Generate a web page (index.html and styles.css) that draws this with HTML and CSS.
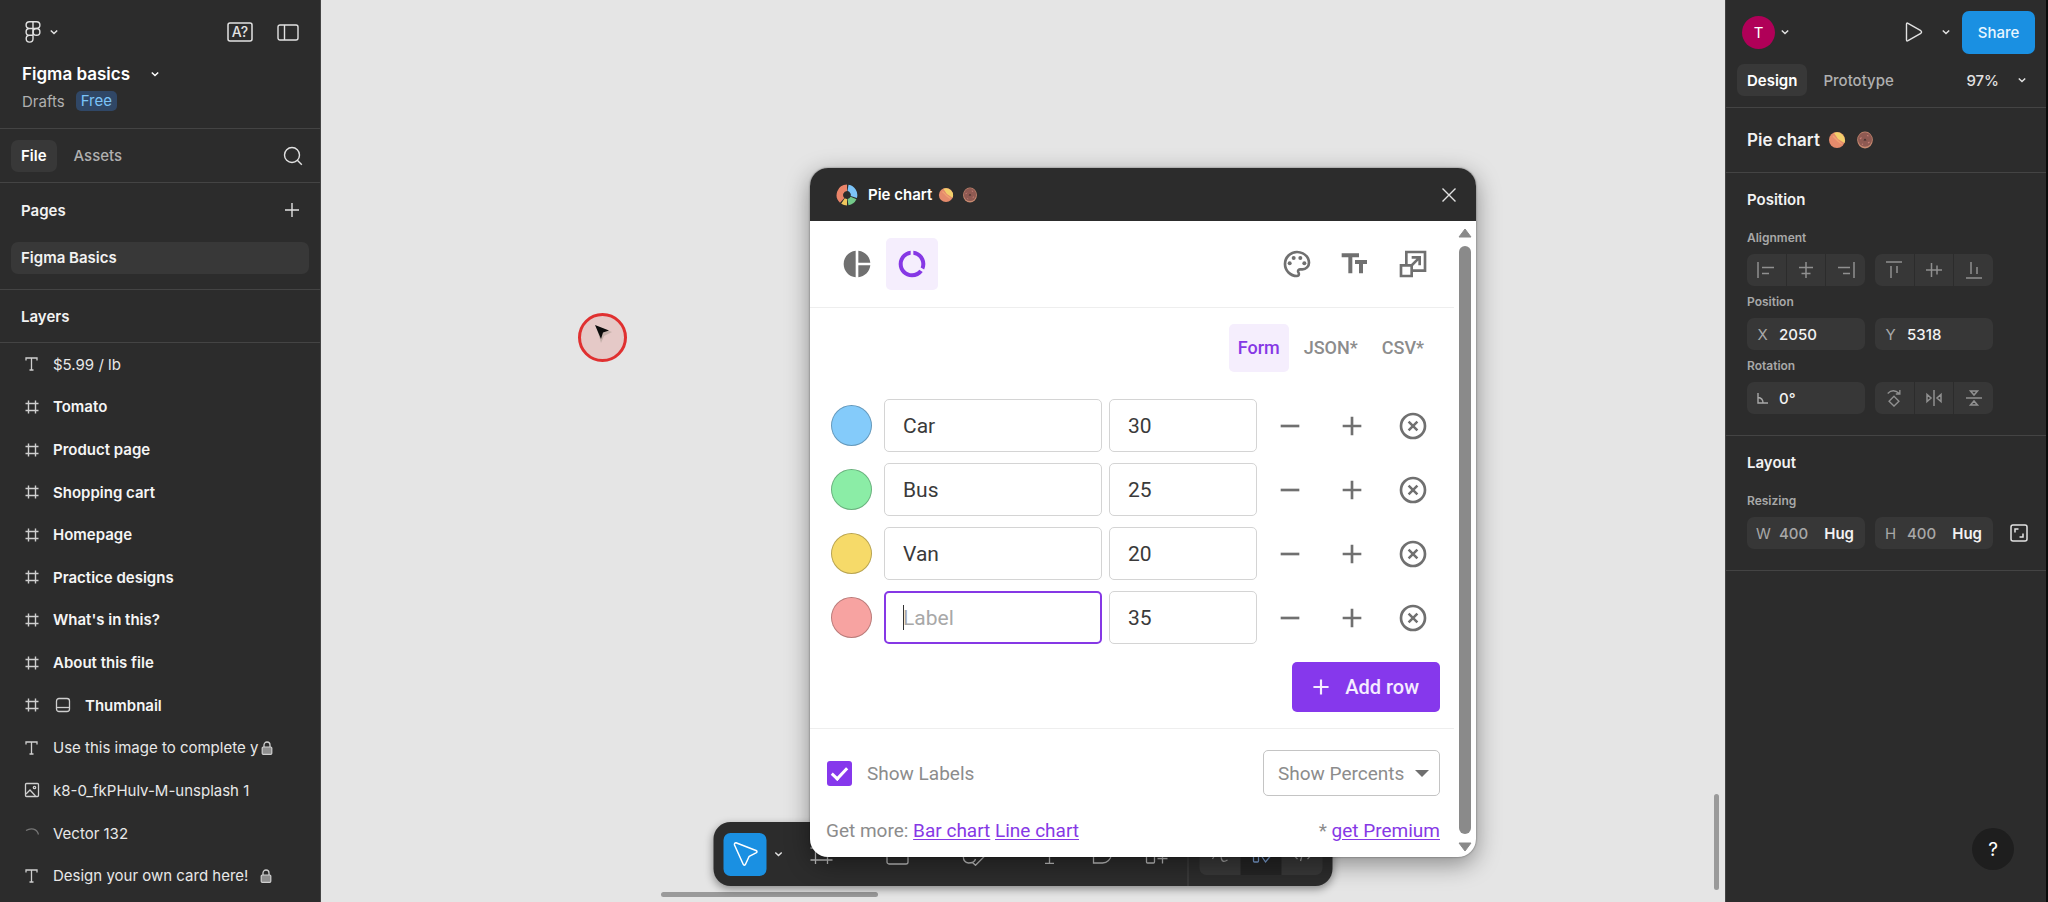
FILE: index.html
```html
<!DOCTYPE html>
<html lang="en">
<head>
<meta charset="utf-8">
<title>Figma basics</title>
<link rel="stylesheet" href="styles.css">
</head>
<body>
<svg class="defs" aria-hidden="true">
  <symbol id="chev" viewBox="0 0 14 14"><path d="M3.800 5.500 7 8.500l3.200-3" fill="none" stroke="currentColor" stroke-width="1.500"/></symbol>
  <symbol id="frame" viewBox="0 0 16 16"><path d="M4.500 1.500v13M11.500 1.500v13M1.500 4.500h13M1.500 11.500h13" fill="none" stroke="currentColor" stroke-width="1.400"/></symbol>
  <symbol id="text" viewBox="0 0 16 16"><path d="M2 4.500V2h11v2.500M7.500 2v12M5.500 14h4" fill="none" stroke="currentColor" stroke-width="1.300"/></symbol>
  <symbol id="lock" viewBox="0 0 12 16"><path d="M3 7V5a3 3 0 0 1 6 0v2" fill="none" stroke="currentColor" stroke-width="1.300"/><rect x="1.200" y="7" width="9.600" height="7.300" rx="1" fill="#8f8f8f" stroke="currentColor" stroke-width="1.200"/></symbol>
  <symbol id="peach" viewBox="0 0 18 18"><circle cx="9" cy="9" r="8" fill="#e58b6c"/><path d="M6 2A8 8 0 0 1 16.500 12L10 8Z" fill="#f2cf6b"/><path d="m5 5 3 3 2 2 4 3" fill="none" stroke="#f0a272" stroke-width="1.500"/></symbol>
  <symbol id="donut" viewBox="0 0 18 18"><ellipse cx="9" cy="9" rx="7.800" ry="8.400" fill="#c88a70"/><ellipse cx="9" cy="8.500" rx="7" ry="7.300" fill="#8f5a52"/><path d="M7.500 9.500 9 7.500l1.500 2Z" fill="#3a2b29"/><path d="m4 8 1.500-1.500M11 4.500l1.500.5M12 12l1.500-1M6 13l1 .5" stroke="#c77f76" stroke-width="1.100"/></symbol>
  <symbol id="minus" viewBox="0 0 24 24"><path d="M19 13H5v-2h14Z" fill="currentColor"/></symbol>
  <symbol id="plus" viewBox="0 0 24 24"><path d="M19 13h-6v6h-2v-6H5v-2h6V5h2v6h6Z" fill="currentColor"/></symbol>
  <symbol id="remove" viewBox="0 0 24 24"><circle cx="12" cy="12" r="9" fill="none" stroke="currentColor" stroke-width="2"/><path d="m8.700 8.700 6.600 6.600m0-6.600-6.600 6.600" stroke="currentColor" stroke-width="1.900"/></symbol>
</svg>

<div class="app">
  <aside class="panel left">
    <header class="file-head">
      <div class="bar">
        <button class="bare menu" aria-label="Main menu">
          <svg width="18" height="24" viewBox="0 0 18 24" fill="none" stroke="currentColor" stroke-width="1.400"><path d="M9 1.700H5.500a3.400 3.400 0 0 0 0 6.800H9ZM9 1.700h3.500a3.400 3.400 0 0 1 0 6.800H9ZM9 8.500H5.500a3.400 3.400 0 0 0 0 6.800H9ZM9 15.300H5.500A3.400 3.400 0 1 0 9 18.700Z"/><circle cx="12.500" cy="11.900" r="3.400"/></svg>
          <svg width="14" height="14"><use href="#chev"/></svg>
        </button>
        <span class="grow"></span>
        <button class="bare" aria-label="Missing fonts"><svg width="26" height="20" viewBox="0 0 26 20"><rect x="1" y="1" width="24" height="18" rx="2" fill="none" stroke="currentColor" stroke-width="1.500"/><text x="13" y="15" text-anchor="middle" class="svg-label">A?</text></svg></button>
        <button class="bare" aria-label="Toggle panels"><svg width="22" height="17" viewBox="0 0 22 17" fill="none" stroke="currentColor" stroke-width="1.400"><rect x="1" y="1" width="20" height="15" rx="2"/><path d="M7.500 1v15"/></svg></button>
      </div>
      <button class="bare file-name">Figma basics <svg width="14" height="14"><use href="#chev"/></svg></button>
      <div class="crumbs"><a href="#drafts">Drafts</a><span class="plan">Free</span></div>
    </header>
    <nav class="tabs">
      <button class="tab on">File</button><button class="tab">Assets</button>
      <span class="grow"></span>
      <button class="bare" aria-label="Search"><svg width="20" height="20" viewBox="0 0 20 20" fill="none" stroke="currentColor" stroke-width="1.400"><circle cx="9" cy="9" r="7.500"/><path d="m14.300 14.300 4.500 4.500"/></svg></button>
    </nav>
    <section class="pages">
      <div class="section-head"><h2>Pages</h2><button class="bare" aria-label="Add page"><svg width="16" height="16" viewBox="0 0 16 16" stroke="currentColor" stroke-width="1.400"><path d="M8 1v14M1 8h14"/></svg></button></div>
      <button class="page-item">Figma Basics</button>
    </section>
    <div class="section-head layers-head"><h2>Layers</h2></div>
    <ul class="layers">
      <li><svg class="ico"><use href="#text"/></svg><span>$5.99 / lb</span></li>
      <li class="strong"><svg class="ico"><use href="#frame"/></svg><span>Tomato</span></li>
      <li class="strong"><svg class="ico"><use href="#frame"/></svg><span>Product page</span></li>
      <li class="strong"><svg class="ico"><use href="#frame"/></svg><span>Shopping cart</span></li>
      <li class="strong"><svg class="ico"><use href="#frame"/></svg><span>Homepage</span></li>
      <li class="strong"><svg class="ico"><use href="#frame"/></svg><span>Practice designs</span></li>
      <li class="strong"><svg class="ico"><use href="#frame"/></svg><span>What's in this?</span></li>
      <li class="strong"><svg class="ico"><use href="#frame"/></svg><span>About this file</span></li>
      <li class="strong"><svg class="ico"><use href="#frame"/></svg><svg class="ico thumb" viewBox="0 0 16 16" fill="none" stroke="currentColor" stroke-width="1.300"><rect x="1.500" y="1.500" width="13" height="13" rx="2.500"/><path d="M1.500 10.500h13"/></svg><span>Thumbnail</span></li>
      <li><svg class="ico"><use href="#text"/></svg><span class="name">Use this image to complete y</span><svg class="lock"><use href="#lock"/></svg></li>
      <li><svg class="ico" viewBox="0 0 16 16" fill="none" stroke="currentColor" stroke-width="1.300"><rect x="1.500" y="1.500" width="13" height="13" rx="1"/><path d="m2 12 4-4 5.500 6"/><circle cx="10.500" cy="5.500" r="1.200"/></svg><span>k8-0_fkPHulv-M-unsplash 1</span></li>
      <li><svg class="ico" viewBox="0 0 16 16" fill="none" stroke="#777" stroke-width="1.200"><path d="M2 5.500c5-3 11-2 12.500 4"/></svg><span>Vector 132</span></li>
      <li><svg class="ico"><use href="#text"/></svg><span class="name">Design your own card here!</span><svg class="lock"><use href="#lock"/></svg></li>
    </ul>
  </aside>

  <main class="canvas">
    <div class="pointer"><svg width="20" height="20" viewBox="0 0 20 20"><path d="m2 2 5 17 3-7 8-4Z" fill="#c4b0aa"/><path d="M1 1l14 5.500L9 8.500 7 15Z" fill="#0c0c0c"/></svg></div>
    <div class="scroll-v"></div>
    <div class="scroll-h"></div>

    <div class="tools">
      <button class="move" aria-label="Move"><svg width="26" height="26" viewBox="0 0 26 26" fill="none" stroke="currentColor" stroke-width="1.500" stroke-linejoin="round"><path d="M3.500 1.800 23.500 9.500q2 1.200 0 2.300l-6.800 3.500-3.700 8q-1.400 2-2.300 0L2 4Q1.600 1.800 3.500 1.800Z"/></svg></button>
      <svg class="tool-chev" width="14" height="14"><use href="#chev"/></svg>
      <button class="bare tool" aria-label="Frame"><svg width="24" height="24" viewBox="0 0 24 24" fill="none" stroke="currentColor" stroke-width="1.300"><path d="M6 2v20M18 2v20M1 6h22M1 18h22"/></svg></button>
      <button class="bare tool" aria-label="Rectangle"><svg width="24" height="24" viewBox="0 0 24 24" fill="none" stroke="currentColor" stroke-width="1.300"><rect x="1.500" y="2" width="21" height="20" rx="2"/></svg></button>
      <button class="bare tool" aria-label="Pen"><svg width="24" height="24" viewBox="0 0 24 24" fill="none" stroke="currentColor" stroke-width="1.300"><path d="m12 2-10 11q-1 7 5 8l4-.5 3 2.800 9-9V9ZM7 21q6 0 7-4"/></svg></button>
      <button class="bare tool" aria-label="Text"><svg width="24" height="24" viewBox="0 0 24 24" fill="none" stroke="currentColor" stroke-width="1.300"><path d="M3 6V3h18v3M12 3v18M7.500 21.300h9"/></svg></button>
      <button class="bare tool close-set" aria-label="Comment"><svg width="24" height="24" viewBox="0 0 24 24" fill="none" stroke="currentColor" stroke-width="1.300"><path d="M2 21V10a9 9 0 1 1 9 11Z"/></svg></button>
      <button class="bare tool close-set" aria-label="Actions"><svg width="24" height="24" viewBox="0 0 24 24" fill="none" stroke="currentColor" stroke-width="1.300"><rect x="2" y="12" width="8" height="9" rx="1"/><rect x="2" y="2" width="8" height="7" rx="1"/><path d="M18 11.500v10M13 16.500h10"/></svg></button>
      <span class="rule"></span>
      <div class="modes">
        <button aria-label="Draw"><svg width="24" height="24" viewBox="0 0 24 24" fill="none" stroke="currentColor" stroke-width="1.300"><path d="m4 17 7-12 2 12q1 4 6 1"/></svg></button>
        <button class="on" aria-label="Design"><svg width="24" height="24" viewBox="0 0 24 24" fill="none" stroke="#7da2d6" stroke-width="1.300"><rect x="4" y="14" width="5" height="6" rx="1"/><path d="m12 14 4 6 5-6"/></svg></button>
        <button aria-label="Dev mode"><svg width="24" height="24" viewBox="0 0 24 24" fill="none" stroke="currentColor" stroke-width="1.300"><path d="m7 7-5 5 5 5M17 7l5 5-5 5M14 5l-4 14"/></svg></button>
      </div>
    </div>

    <section class="dialog" role="dialog" aria-label="Pie chart">
      <header class="dialog-head">
        <svg width="22" height="22" viewBox="0 0 22 22" fill="none" stroke-width="6.500"><path d="M12 3.900A7.200 7.200 0 0 1 17.800 13" stroke="#7cc4f8"/><path d="M17.500 14a7.200 7.200 0 0 1-5.500 4.100" stroke="#74c98a"/><path d="M11 18.200a7.200 7.200 0 0 1-4-1.200" stroke="#f0c75c"/><path d="M6.200 16.300a7.200 7.200 0 0 1 4.800-12.500" stroke="#ea8469"/></svg>
        <h1>Pie chart</h1>
        <svg class="emo"><use href="#peach"/></svg><svg class="emo"><use href="#donut"/></svg>
        <span class="grow"></span>
        <button class="bare" aria-label="Close"><svg width="14" height="14" viewBox="0 0 14 14" stroke="currentColor" stroke-width="1.400"><path d="m.5.5 13 13m0-13-13 13"/></svg></button>
      </header>
      <div class="dialog-body">
        <div class="plugin">
          <div class="chart-bar">
            <button class="sq" aria-label="Pie"><svg class="mi" viewBox="0 0 24 24"><path d="M11 2v20C5.900 21.500 2 17.200 2 12S5.900 2.500 11 2m2 0v9h9c-.5-4.800-4.200-8.500-9-9m0 11v9c4.700-.5 8.500-4.200 9-9Z"/></svg></button>
            <button class="sq on" aria-label="Donut"><svg class="mi" viewBox="0 0 24 24"><path d="M13 2.050v3.030c3.390.49 6 3.390 6 6.920 0 .9-.18 1.750-.48 2.540l2.600 1.530c.56-1.240.88-2.620.88-4.070 0-5.180-3.950-9.450-9-9.950zM12 19c-3.870 0-7-3.130-7-7 0-3.530 2.610-6.430 6-6.920V2.050c-5.060.5-9 4.760-9 9.950 0 5.520 4.470 10 9.990 10 3.310 0 6.240-1.610 8.060-4.090l-2.600-1.530C16.170 17.980 14.210 19 12 19z"/></svg></button>
            <span class="grow"></span>
            <div class="chart-opts">
              <button class="sq" aria-label="Colors"><svg class="mi" viewBox="0 0 24 24"><path d="M12 22A10 10 0 0 1 12 2c5.500 0 10 4 10 9a6 6 0 0 1-6 6h-1.800c-.3 0-.5.2-.5.500 0 .1.100.2.100.300.400.500.600 1.100.600 1.700.100 1.400-1 2.500-2.400 2.500m0-18a8 8 0 1 0 0 16c.3 0 .5-.2.500-.5 0-.2-.1-.3-.1-.4-.4-.5-.6-1-.6-1.600 0-1.400 1.100-2.500 2.500-2.500H16a4 4 0 0 0 4-4c0-3.900-3.600-7-8-7"/><circle cx="6.500" cy="11.500" r="1.500"/><circle cx="9.500" cy="7.500" r="1.500"/><circle cx="14.500" cy="7.500" r="1.500"/><circle cx="17.500" cy="11.500" r="1.500"/></svg></button>
              <button class="sq" aria-label="Text size"><svg class="mi" viewBox="0 0 24 24"><path d="M2 4v3h5v12h3V7h5V4H2m19 5h-9v3h3v7h3v-7h3V9Z"/></svg></button>
              <button class="sq" aria-label="Resize"><svg class="mi" viewBox="0 0 24 24"><path d="m10.590 12 4-4H11V6h7v7h-2V9.410l-4 4V16h8V4H8v8h2.590M22 2v16H12v4H2V12h4V2h16M10 14H4v6h6v-6Z"/></svg></button>
            </div>
          </div>
          <div class="data">
            <div class="data-tabs"><button class="on">Form</button><button>JSON*</button><button>CSV*</button></div>
            <div class="rows">
              <div class="row"><button class="swatch blue" aria-label="Color of row 1"></button><span class="field"><input aria-label="Label 1" value="Car"></span><input class="num" aria-label="Value 1" value="30"><div class="acts"><button class="sq" aria-label="Decrease"><svg class="mi"><use href="#minus"/></svg></button><button class="sq" aria-label="Increase"><svg class="mi"><use href="#plus"/></svg></button><button class="sq" aria-label="Remove"><svg class="mi"><use href="#remove"/></svg></button></div></div>
              <div class="row"><button class="swatch green" aria-label="Color of row 2"></button><span class="field"><input aria-label="Label 2" value="Bus"></span><input class="num" aria-label="Value 2" value="25"><div class="acts"><button class="sq" aria-label="Decrease"><svg class="mi"><use href="#minus"/></svg></button><button class="sq" aria-label="Increase"><svg class="mi"><use href="#plus"/></svg></button><button class="sq" aria-label="Remove"><svg class="mi"><use href="#remove"/></svg></button></div></div>
              <div class="row"><button class="swatch yellow" aria-label="Color of row 3"></button><span class="field"><input aria-label="Label 3" value="Van"></span><input class="num" aria-label="Value 3" value="20"><div class="acts"><button class="sq" aria-label="Decrease"><svg class="mi"><use href="#minus"/></svg></button><button class="sq" aria-label="Increase"><svg class="mi"><use href="#plus"/></svg></button><button class="sq" aria-label="Remove"><svg class="mi"><use href="#remove"/></svg></button></div></div>
              <div class="row"><button class="swatch red" aria-label="Color of row 4"></button><span class="field active"><input aria-label="Label 4" placeholder="Label"></span><input class="num" aria-label="Value 4" value="35"><div class="acts"><button class="sq" aria-label="Decrease"><svg class="mi"><use href="#minus"/></svg></button><button class="sq" aria-label="Increase"><svg class="mi"><use href="#plus"/></svg></button><button class="sq" aria-label="Remove"><svg class="mi"><use href="#remove"/></svg></button></div></div>
            </div>
            <button class="add"><svg width="26" height="26"><use href="#plus"/></svg>Add row</button>
          </div>
          <footer class="plugin-foot">
            <div class="foot-row">
              <label class="check"><input type="checkbox" checked>Show Labels</label>
              <span class="select"><select aria-label="Value display"><option>Show Percents</option></select><svg width="14" height="7" viewBox="0 0 14 7"><path d="M0 0h14L7 7Z" fill="#6f6f6f"/></svg></span>
            </div>
            <div class="foot-row more"><span>Get more: <a href="#bar">Bar chart</a> <a href="#line">Line chart</a></span><span>* <a href="#premium">get Premium</a></span></div>
          </footer>
        </div>
        <div class="scrollbar"><svg width="14" height="10" viewBox="0 0 14 10"><path d="M7 1 13 9H1Z" fill="#8a8a8a" stroke="#8a8a8a" stroke-linejoin="round"/></svg><span></span><svg width="14" height="10" viewBox="0 0 14 10"><path d="M7 9 13 1H1Z" fill="#8a8a8a" stroke="#8a8a8a" stroke-linejoin="round"/></svg></div>
      </div>
    </section>
  </main>

  <aside class="panel right">
    <header class="share-head">
      <div class="bar">
        <button class="bare user" aria-label="Account"><span class="avatar">T</span><svg width="14" height="14"><use href="#chev"/></svg></button>
        <span class="grow"></span>
        <button class="bare play" aria-label="Present"><svg width="18" height="20" viewBox="0 0 18 20" fill="none" stroke="currentColor" stroke-width="1.400" stroke-linejoin="round"><path d="M1.500 2.200Q1.500.5 3 1.300L15.800 8.700q1.500 1.300 0 2.600L3 18.700q-1.500.8-1.500-.9Z"/></svg><svg width="14" height="14"><use href="#chev"/></svg></button>
        <button class="share">Share</button>
      </div>
      <div class="mode-tabs">
        <button class="tab on">Design</button><button class="tab">Prototype</button>
        <span class="grow"></span>
        <button class="bare zoom">97% <svg width="14" height="14"><use href="#chev"/></svg></button>
      </div>
    </header>
    <h2 class="sel-name">Pie chart <svg class="emo"><use href="#peach"/></svg><svg class="emo"><use href="#donut"/></svg></h2>
    <section class="props">
      <h3>Position</h3>
      <h4>Alignment</h4>
      <div class="pair">
        <div class="seg">
          <button aria-label="Align left"><svg class="al" viewBox="0 0 18 18"><path d="M1 1v16M5 6.500h12M5 12.500h7"/></svg></button>
          <button aria-label="Align horizontal centers"><svg class="al" viewBox="0 0 18 18"><path d="M9 1v16M2 6.500h14M4.500 12.500h9"/></svg></button>
          <button aria-label="Align right"><svg class="al" viewBox="0 0 18 18"><path d="M17 1v16M1 6.500h12M6 12.500h7"/></svg></button>
        </div>
        <div class="seg">
          <button aria-label="Align top"><svg class="al" viewBox="0 0 18 18"><path d="M1 1h16M6 5v12M12 5v7"/></svg></button>
          <button aria-label="Align vertical centers"><svg class="al" viewBox="0 0 18 18"><path d="M1 9h16M6.500 2v14M12 4.500v9"/></svg></button>
          <button aria-label="Align bottom"><svg class="al" viewBox="0 0 18 18"><path d="M1 17h16M6 1v12M12 6v7"/></svg></button>
        </div>
      </div>
      <h4>Position</h4>
      <div class="pair">
        <label class="prop"><span>X</span><input value="2050"></label>
        <label class="prop"><span>Y</span><input value="5318"></label>
      </div>
      <h4>Rotation</h4>
      <div class="pair">
        <label class="prop"><span><svg width="11" height="11" viewBox="0 0 11 11" fill="none" stroke="currentColor" stroke-width="1.400"><path d="M1 0v10h10M1 4.500Q6 5 6 10"/></svg></span><input aria-label="Rotation" value="0°"></label>
        <div class="seg">
          <button aria-label="Rotate 90"><svg class="al" viewBox="0 0 18 20"><path d="m9 8 5.500 5.500L9 19l-5.500-5.500ZM2 5q6-6 13 0M15.500 1v4.500H11"/></svg></button>
          <button aria-label="Flip horizontal"><svg class="al" viewBox="0 0 18 18"><path d="M9 1v16M2 5.500v7L6 9ZM16 5.500v7L12 9Z"/></svg></button>
          <button aria-label="Flip vertical"><svg class="al" viewBox="0 0 18 18"><path d="M1 9h16M5.500 2h7L9 6ZM5.500 16h7L9 12Z"/></svg></button>
        </div>
      </div>
    </section>
    <section class="props">
      <h3>Layout</h3>
      <h4>Resizing</h4>
      <div class="pair">
        <label class="prop"><span>W</span><input class="dim" value="400"><b>Hug</b></label>
        <label class="prop"><span>H</span><input class="dim" value="400"><b>Hug</b></label>
        <button class="bare" aria-label="Resize to fit"><svg width="18" height="18" viewBox="0 0 18 18" fill="none" stroke="currentColor" stroke-width="1.500"><rect x="1" y="1" width="16" height="16" rx="2"/><path d="M5 8.500V5h3.500M13 9.500V13H9.500"/></svg></button>
      </div>
    </section>
    <span class="grow"></span>
    <button class="help" aria-label="Help">?</button>
  </aside>
</div>
</body>
</html>
```
FILE: styles.css
```css
* { box-sizing: border-box; }
body { margin: 0; background: #0b0b0b; font-family: Inter, "Liberation Sans", sans-serif; font-size: 15px; }
button, input, select { font: inherit; color: inherit; margin: 0; }
button { border: 0; background: none; padding: 0; cursor: pointer; }
h1, h2, h3, h4 { margin: 0; font-size: 15px; font-weight: 600; }
svg { display: block; flex: none; }
.defs { position: absolute; width: 0; height: 0; }
.grow { flex: 1; }
.svg-label { font-size: 14px; font-weight: 500; fill: currentColor; }

.app { display: grid; grid-template-columns: 321px 1fr 321px; height: 100vh; min-height: 860px; padding-right: 2px; }
.panel { display: flex; flex-direction: column; background: #2c2c2c; color: #f2f2f2; min-width: 0; }
.left { border-right: 1px solid #444; }
.right { border-left: 1px solid #444; }
.bare { display: flex; align-items: center; color: #e2e2e2; }
.bar { display: flex; align-items: center; height: 44px; }
.emo { width: 18px; height: 18px; }

.file-head { padding: 10px 21px 15px 22px; border-bottom: 1px solid #444; }
.file-head .bar { gap: 24px; }
.menu { gap: 5px; padding-left: 2px; }
.file-name { height: 30px; margin-top: 5px; gap: 18px; font-size: 17px; font-weight: 600; color: #fff; }
.crumbs { display: flex; align-items: center; gap: 11px; height: 24px; color: #b0b0b0; }
.crumbs a { color: inherit; text-decoration: none; }
.plan { padding: 0 5px; line-height: 20px; border-radius: 5px; background: #304766; color: #7cc4f8; }

.tabs { display: flex; align-items: center; height: 54px; padding: 0 17px 0 11px; gap: 7px; border-bottom: 1px solid #444; }
.tab { height: 32px; padding: 0 10px; border-radius: 7px; font-weight: 500; color: #b0b0b0; }
.tab.on { background: #383838; color: #fff; font-weight: 600; }
.section-head { display: flex; align-items: center; justify-content: space-between; height: 54px; padding: 0 20px 0 21px; }
.pages { padding-bottom: 15px; border-bottom: 1px solid #444; }
.page-item { display: block; width: calc(100% - 22px); height: 32px; margin: 5px 11px 0; padding: 0 10px 1px; border-radius: 7px; background: #383838; text-align: left; font-weight: 600; }
.layers-head { height: 53px; border-bottom: 1px solid #444; }
.layers { display: flex; flex-direction: column; flex: 1; list-style: none; margin: 0; padding: 0 48px 5px 24px; color: #e8e8e8; }
.layers li { display: flex; flex: 1; align-items: center; gap: 13px; white-space: nowrap; }
.strong { font-weight: 600; color: #f5f5f5; }
.ico { width: 16px; height: 16px; color: #cfcfcf; }
.thumb { margin: 0 1px 0 2px; }
.name { flex: 1; }
.lock { width: 12px; height: 16px; margin-left: -10px; color: #cfcfcf; }

.canvas { position: relative; overflow: hidden; background: #e5e5e5; }
.pointer { position: absolute; left: 257px; top: 313px; width: 49px; height: 49px; padding: 8px 13px; border: 3px solid #e03030; border-radius: 50%; background: #e5c9c7; }
.scroll-v { position: absolute; right: 6px; top: 794px; width: 5px; height: 96px; border-radius: 3px; background: #9a9a9a; }
.scroll-h { position: absolute; left: 340px; bottom: 5px; width: 217px; height: 5px; border-radius: 3px; background: #9a9a9a; }

.tools { position: absolute; left: 50%; bottom: 16px; transform: translateX(-50%); display: flex; align-items: center; width: 619px; height: 64px; padding: 0 10px; border-radius: 17px; background: #2c2c2c; color: #e2e2e2; box-shadow: 0 3px 8px rgba(0, 0, 0, .4); }
.move { display: grid; place-items: center; width: 43px; height: 43px; border-radius: 7px; background: #1a90e2; color: #fff; }
.tool-chev { margin: 0 24px 0 5px; }
.tool { margin-right: 52px; color: #bdbdbd; }
.tool[aria-label="Text"] { margin-right: 30px; }
.close-set { margin-right: 29px; }
.close-set + .close-set { margin-right: 19px; }
.rule { width: 1px; align-self: stretch; background: #444; }
.modes { display: flex; flex: 1; margin-left: 11px; height: 42px; border-radius: 7px; overflow: hidden; background: #383838; color: #a0a0a0; }
.modes button { flex: 1; display: grid; place-items: center; }
.modes .on { background: #242424; }

.dialog { position: absolute; left: 489px; top: 168px; width: 666px; border-radius: 18px; overflow: hidden; background: #fff; box-shadow: 0 0 2px rgba(0, 0, 0, .5), 0 7px 24px rgba(0, 0, 0, .4); font-family: Roboto, "Liberation Sans", sans-serif; color: #8c8c8c; }
.dialog-head { display: flex; align-items: center; height: 53px; padding: 0 20px 0 26px; background: #2c2c2c; color: #fff; font-family: Inter, "Liberation Sans", sans-serif; }
.dialog-head h1 { margin: 0 6px 0 10px; }
.dialog-head .emo { width: 16px; height: 16px; margin-right: 8px; }
.dialog-body { display: flex; }
.plugin { flex: 1; }
.scrollbar { display: flex; flex-direction: column; align-items: center; gap: 8px; width: 22px; padding: 7px 0 5px; }
.scrollbar span { flex: 1; width: 12px; border-radius: 6px; background: #8a8a8a; }
.sq { display: grid; place-items: center; width: 52px; height: 52px; border-radius: 5px; color: #707070; }
.sq.on { background: #f5eefd; color: #8638e5; }
.mi { width: 32px; height: 32px; fill: currentColor; }
.chart-bar { display: flex; align-items: center; gap: 3px; height: 87px; padding: 0 15px 0 21px; border-bottom: 1px solid #eee; }
.chart-opts { display: flex; gap: 6px; }
.data { display: flex; flex-direction: column; padding: 16px 14px 16px 21px; border-bottom: 1px solid #eee; }
.data-tabs { display: flex; justify-content: flex-end; gap: 6px; padding-right: 7px; }
.data-tabs button { height: 48px; padding: 0 9px 2px; border-radius: 5px; font-size: 18px; font-weight: 500; }
.data-tabs .on { background: #f5eefd; color: #8638e5; }
.rows { display: grid; gap: 11px; margin: 27px 1px 0 0; }
.row { display: flex; align-items: center; gap: 7px; }
.swatch { flex: none; width: 41px; height: 41px; margin-right: 5px; border: 1px solid rgba(0, 0, 0, .25); border-radius: 50%; }
.blue { background: #84cbfa; }
.green { background: #8beda6; }
.yellow { background: #f6da69; }
.red { background: #f7a3a1; }
.field { position: relative; flex: 1; }
.row input { display: block; width: 100%; height: 53px; padding: 0 18px; border: 1px solid #d4d4d4; border-radius: 5px; background: #fff; color: #3a3a3a; font-size: 21px; outline: 0; }
.row input::placeholder { color: #a8a8a8; }
.row .num { width: 148px; }
.row .active input { padding: 0 17px; border: 2px solid #8638e5; }
.active::after { content: ""; position: absolute; left: 19px; top: 14px; width: 1px; height: 25px; background: #333; }
.acts { display: flex; justify-content: space-between; width: 175px; }
.add { display: flex; align-items: center; align-self: flex-end; gap: 11px; height: 50px; margin-top: 18px; padding: 0 21px 0 16px; border-radius: 5px; background: #8638ec; color: #f5ecff; font-size: 20px; font-weight: 500; }
.plugin-foot { padding: 21px 14px 11px 16px; font-size: 19px; }
.foot-row { display: flex; align-items: center; justify-content: space-between; }
.more { margin-top: 20px; line-height: 30px; }
.more a { color: #8638e5; text-underline-offset: 2px; }
.check { display: flex; align-items: center; gap: 15px; padding-left: 1px; }
.check input { appearance: none; width: 25px; height: 25px; margin: 0; border-radius: 3px; background: #8638ec; }
.check input::after { content: ""; display: block; width: 6px; height: 13px; margin: 3px 0 0 8px; border: solid #fff; border-width: 0 3px 3px 0; transform: rotate(43deg); }
.select { position: relative; }
.select select { appearance: none; height: 46px; padding: 0 34px 0 14px; border: 1px solid #c4c4c4; border-radius: 5px; background: #fff; }
.select svg { position: absolute; right: 11px; top: 20px; pointer-events: none; }

.share-head { padding: 10px 11px 11px; border-bottom: 1px solid #444; }
.user { gap: 3px; padding-left: 5px; }
.avatar { width: 33px; height: 33px; border-radius: 50%; background: #b00058; color: #fff; line-height: 33px; }
.play { gap: 16px; margin-right: 9px; }
.share { width: 73px; height: 43px; border-radius: 7px; background: #1a90e2; color: #e8f6ff; font-weight: 500; }
.mode-tabs { display: flex; align-items: center; gap: 6px; margin-top: 10px; }
.zoom { gap: 16px; padding-right: 6px; font-weight: 500; }
.sel-name { display: flex; align-items: center; height: 65px; padding: 0 0 1px 21px; font-size: 17px; border-bottom: 1px solid #444; }
.sel-name .emo { margin-left: 8px; }
.sel-name .emo + .emo { margin-left: 10px; }
.props { padding: 10px 18px 21px 21px; border-bottom: 1px solid #444; }
.props h3 { line-height: 34px; margin-bottom: 5px; }
.props h4 { font-size: 12px; font-weight: 600; line-height: 32px; color: #a8a8a8; }
.pair { display: grid; grid-template-columns: 118px 118px 1fr; gap: 10px; align-items: center; }
.pair > .bare { justify-self: end; }
.seg { display: flex; gap: 1px; height: 32px; border-radius: 7px; overflow: hidden; }
.seg button { flex: 1; display: grid; place-items: center; background: #373737; color: #909090; }
.al { width: 18px; height: 18px; fill: none; stroke: currentColor; stroke-width: 1.500; }
.prop { display: flex; align-items: center; height: 32px; padding: 0 11px 0 9px; border-radius: 7px; background: #373737; }
.prop span { display: grid; place-items: center; width: 13px; margin-right: 10px; color: #a8a8a8; }
.prop input { flex: 1; min-width: 0; width: 0; padding: 0; border: 0; background: none; font-weight: 500; outline: 0; }
.prop .dim { color: #a8a8a8; font-weight: 500; }
.prop b { font-weight: 600; }
.help { align-self: flex-end; width: 42px; height: 42px; margin: 0 32px 32px 0; border-radius: 50%; background: #1e1e1e; color: #fff; font-size: 19px; }
```
